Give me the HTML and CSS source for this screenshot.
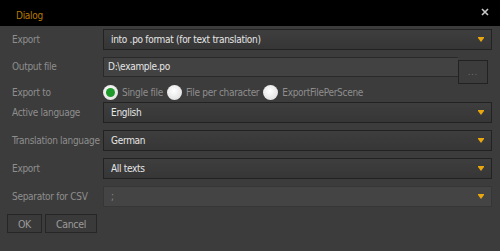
FILE: index.html
```html
<!DOCTYPE html>
<html lang="en">
<head>
  <meta charset="UTF-8" />
  <title>Dialog</title>
  <link rel="stylesheet" href="styles.css">
</head>
<body>
  <div class="dialog">
    <div class="titlebar">
      <span class="title">Dialog</span>
      <span class="close">
        <svg width="8" height="8" viewBox="0 0 8 8"><path d="M1 1L7 7M7 1L1 7" stroke="#c8c8c8" stroke-width="1.6"/></svg>
      </span>
    </div>

    <div class="form">
      <div class="row">
        <label class="label">Export</label>
        <div class="combo"><span>into .po format (for text translation)</span><i class="arrow"></i></div>
      </div>

      <div class="row row-file">
        <label class="label">Output file</label>
        <div class="file-field">
          <div class="input">D:\example.po</div>
          <button class="browse">...</button>
        </div>
      </div>

      <div class="row row-radio">
        <label class="label">Export to</label>
        <div class="radios">
          <span class="radio checked"></span><span class="radio-text">Single file</span>
          <span class="radio"></span><span class="radio-text">File per character</span>
          <span class="radio"></span><span class="radio-text">ExportFilePerScene</span>
        </div>
      </div>

      <div class="row row-tight">
        <label class="label">Active language</label>
        <div class="combo"><span>English</span><i class="arrow"></i></div>
      </div>

      <div class="row">
        <label class="label">Translation language</label>
        <div class="combo"><span>German</span><i class="arrow"></i></div>
      </div>

      <div class="row">
        <label class="label">Export</label>
        <div class="combo"><span>All texts</span><i class="arrow"></i></div>
      </div>

      <div class="row">
        <label class="label">Separator for CSV</label>
        <div class="combo disabled"><span>;</span><i class="arrow"></i></div>
      </div>

      <div class="buttons">
        <button class="btn btn-ok">OK</button>
        <button class="btn btn-cancel">Cancel</button>
      </div>
    </div>
  </div>
</body>
</html>
```

FILE: styles.css
```css
body {
  margin: 0;
  background-color: #3c3c3c;
  font-family: "DejaVu Sans Condensed", "DejaVu Sans", sans-serif;
  font-size: 10px;
  letter-spacing: -0.3px;
  overflow: hidden;
}

.dialog {
  width: 500px;
  height: 251px;
  background-color: #3c3c3c;
}

.titlebar {
  height: 26px;
  background-color: #000;
  display: flex;
  align-items: center;
  justify-content: space-between;
  padding: 0 11px 0 16px;
}

.title {
  color: #b87a00;
  padding-top: 4px;
}

.close {
  display: flex;
  padding-bottom: 2px;
}

.form {
  padding: 3px 8px 0 12px;
}

.row {
  display: grid;
  grid-template-columns: 91px 1fr;
  align-items: center;
  margin-bottom: 7px;
}

.row-file {
  align-items: start;
  margin-bottom: 2px;
}

.row-file .label {
  line-height: 19px;
}

.row-radio {
  margin-bottom: 3px;
}

.label {
  color: #8e8e8e;
  white-space: nowrap;
}

.combo {
  height: 19px;
  border: 1px solid #222;
  background: linear-gradient(#3e3e3e, #363636);
  display: flex;
  align-items: center;
  justify-content: space-between;
  padding: 0 6px 0 7px;
  color: #e6e6e6;
}

.combo.disabled {
  background: #444;
  border-color: #363636;
  color: #8a8a8a;
}

.arrow {
  width: 0;
  height: 0;
  border-left: 3px solid transparent;
  border-right: 3px solid transparent;
  border-top: 4px solid #e8a70e;
  position: relative;
  margin-right: 1px;
}

.arrow::before {
  content: "";
  position: absolute;
  left: -3px;
  top: -5px;
  width: 6px;
  height: 1px;
  background: #e8a70e;
}

.file-field {
  display: flex;
  padding-right: 4px;
}

.input {
  flex: 1;
  height: 18px;
  line-height: 18px;
  border: 1px solid #2a2a2a;
  border-right: none;
  background-color: #424242;
  color: #e6e6e6;
  padding-left: 4px;
}

.browse {
  width: 30px;
  height: 24px;
  margin-top: 3px;
  background-color: #3c3c3c;
  border: 1px solid #222;
  color: #777;
  font-family: inherit;
  font-size: 8px;
  padding: 0;
  letter-spacing: 1px;
}

.radios {
  display: flex;
  align-items: center;
  height: 13px;
}

.radio {
  width: 15px;
  height: 15px;
  border-radius: 50%;
  background: radial-gradient(circle at 45% 40%, #ffffff, #d8d8d8);
  margin-right: 4px;
  position: relative;
}

.radio.checked::after {
  content: "";
  position: absolute;
  left: 3px;
  top: 3px;
  width: 9px;
  height: 9px;
  border-radius: 50%;
  background: #1e9a2a;
}

.radio-text {
  color: #8e8e8e;
  margin-right: 4px;
}

.buttons {
  display: flex;
  gap: 3px;
  margin: 2px 0 0 -5px;
}

.btn {
  height: 19px;
  background-color: #3a3a3a;
  border: 1px solid #262626;
  color: #9a9a9a;
  font-family: inherit;
  font-size: 10.5px;
  letter-spacing: inherit;
  padding: 0;
}

.btn-ok {
  width: 35px;
}

.btn-cancel {
  width: 52px;
}
```
